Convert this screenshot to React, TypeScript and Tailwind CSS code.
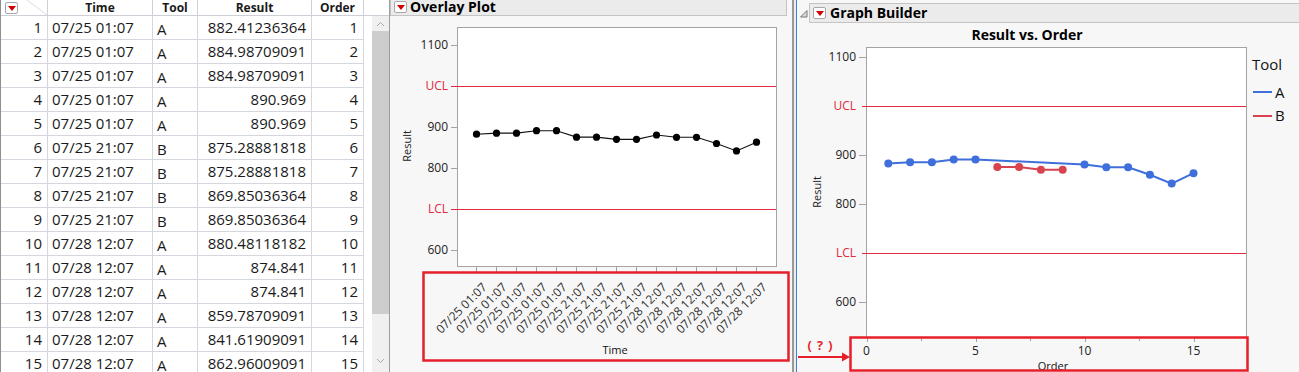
import React from 'react';

// JMP-style report: data table + Overlay Plot + Graph Builder

type Row = { time: string; tool: 'A' | 'B'; result: string };

const rows: Row[] = [
  { time: '07/25 01:07', tool: 'A', result: '882.41236364' },
  { time: '07/25 01:07', tool: 'A', result: '884.98709091' },
  { time: '07/25 01:07', tool: 'A', result: '884.98709091' },
  { time: '07/25 01:07', tool: 'A', result: '890.969' },
  { time: '07/25 01:07', tool: 'A', result: '890.969' },
  { time: '07/25 21:07', tool: 'B', result: '875.28881818' },
  { time: '07/25 21:07', tool: 'B', result: '875.28881818' },
  { time: '07/25 21:07', tool: 'B', result: '869.85036364' },
  { time: '07/25 21:07', tool: 'B', result: '869.85036364' },
  { time: '07/28 12:07', tool: 'A', result: '880.48118182' },
  { time: '07/28 12:07', tool: 'A', result: '874.841' },
  { time: '07/28 12:07', tool: 'A', result: '874.841' },
  { time: '07/28 12:07', tool: 'A', result: '859.78709091' },
  { time: '07/28 12:07', tool: 'A', result: '841.61909091' },
  { time: '07/28 12:07', tool: 'A', result: '862.96009091' },
];

const RED = '#e6283f';
const AXIS = '#a3a3a3';

// snap to pixel centre so 1px lines stay crisp
const crisp = (n: number) => Math.round(n) + 0.5;

const RedMenuButton: React.FC = () => (
  <span className="flex h-[12px] w-[13px] shrink-0 items-center justify-center rounded-[2px] border border-[#a8a8a8] bg-white">
    <span className="h-0 w-0 border-x-[4px] border-t-[5px] border-x-transparent border-t-[#d40000]" />
  </span>
);

const Chevron: React.FC<{ up?: boolean }> = ({ up }) => (
  <svg width="9" height="6" viewBox="0 0 9 6">
    <polyline
      points={up ? '1,5 4.5,1.5 8,5' : '1,1 4.5,4.5 8,1'}
      fill="none"
      stroke="#a8a8a8"
      strokeWidth="1"
    />
  </svg>
);

const gridCols = 'grid grid-cols-[47px_105px_45px_114px_52px]';

const DataTable: React.FC = () => (
  <div className="flex w-[389px] shrink-0 flex-col border-l border-[#8f8f8f] bg-white">
    {/* header */}
    <div className="flex h-[16px] border-b border-[#cfcfd8] text-[12px] font-bold leading-[15px]">
      <div className={gridCols}>
        <div className="relative flex items-start border-r border-[#cfcfd8] pl-[4px] pt-[2px]">
          <svg className="absolute inset-0" width="46" height="15">
            <line x1="26" y1="0" x2="46" y2="15" stroke="#dcdcdc" />
          </svg>
          <RedMenuButton />
        </div>
        <div className="border-r border-[#cfcfd8] text-center">Time</div>
        <div className="border-r border-[#cfcfd8] text-center">Tool</div>
        <div className="border-r border-[#cfcfd8] text-center">Result</div>
        <div className="border-r border-[#cfcfd8] text-center">Order</div>
      </div>
      <div className="flex-1" />
    </div>

    {/* body */}
    <div className="flex flex-1 overflow-hidden">
      <div className="w-[371px] text-[15px] leading-[23px]">
        {rows.map((r, i) => (
          <div key={i} className={`${gridCols} h-[24px] w-[363px] border-b border-[#d6d6de]`}>
            <div className="border-r border-[#d6d6de] pr-[5px] text-right">{i + 1}</div>
            <div className="border-r border-[#d6d6de] pl-[4px]">{r.time}</div>
            <div className="border-r border-[#d6d6de] pl-[4px] pt-[2px]">{r.tool}</div>
            <div className="border-r border-[#d6d6de] pr-[5px] text-right">{r.result}</div>
            <div className="border-r border-[#d6d6de] pr-[5px] text-right">{i + 1}</div>
          </div>
        ))}
      </div>
      <div className="flex w-[17px] flex-col bg-[#f0f0f0]">
        <div className="flex h-[15px] items-center justify-center">
          <Chevron up />
        </div>
        <div className="h-[283px] bg-[#cdcdcd]" />
        <div className="flex flex-1 items-end justify-center pb-[8px]">
          <Chevron />
        </div>
      </div>
    </div>
  </div>
);

const values = rows.map((r) => parseFloat(r.result));

const OverlayPlot: React.FC = () => {
  const yOf = (v: number) => 87 + (1000 - v) * 0.41;
  const xOf = (i: number) => 476.5 + i * 20;
  const pts = values.map((v, i) => `${xOf(i)},${yOf(v)}`).join(' ');

  return (
    <div className="flex w-[403px] shrink-0 flex-col border-l border-[#9c9c9c] bg-[#f7f7f7]">
      <div className="-mt-[1px] flex h-[17px] w-[397px] items-start border border-[#c4c4c4] bg-[#ebebeb] pl-[3px] pt-[1px]">
        <RedMenuButton />
        <span className="-mt-[1px] ml-[3px] text-[14px] font-bold leading-[14px] text-black">Overlay Plot</span>
      </div>
      <svg width="402" height="355" viewBox="390 17 402 355" className="block">
        <rect x="457.5" y="28.5" width="319" height="239" fill="#fff" stroke={AXIS} />
        {[1100, 900, 800, 600].map((v) => (
          <g key={v}>
            <line x1="451" x2="457" y1={crisp(yOf(v))} y2={crisp(yOf(v))} stroke={AXIS} />
            <text x="448" y={yOf(v) + 4} fontSize="12" textAnchor="end" fill="#222">
              {v}
            </text>
          </g>
        ))}
        {[
          ['UCL', 1000],
          ['LCL', 700],
        ].map(([label, v]) => (
          <g key={label}>
            <line
              x1="451"
              x2="776"
              y1={crisp(yOf(v as number))}
              y2={crisp(yOf(v as number))}
              stroke={RED}
            />
            <text x="448" y={yOf(v as number) + 4} fontSize="12" textAnchor="end" fill={RED}>
              {label}
            </text>
          </g>
        ))}
        <text x="411" y="147" fontSize="11" textAnchor="middle" fill="#222" transform="rotate(-90 411 147)">
          Result
        </text>
        {values.map((_, i) => (
          <line key={i} x1={xOf(i)} x2={xOf(i)} y1="268" y2="273" stroke={AXIS} />
        ))}
        <polyline points={pts} fill="none" stroke="#111" strokeWidth="1.1" />
        {values.map((v, i) => (
          <circle key={i} cx={xOf(i)} cy={yOf(v)} r="3.6" fill="#000" />
        ))}
        {rows.map((r, i) => {
          const ax = xOf(i) + 11;
          const ay = 289;
          return (
            <text
              key={i}
              x={ax}
              y={ay}
              fontSize="12"
              textAnchor="end"
              fill="#333"
              transform={`rotate(-45 ${ax} ${ay})`}
            >
              {r.time}
            </text>
          );
        })}
        <text x="615" y="355" fontSize="11" textAnchor="middle" fill="#111">
          Time
        </text>
        <rect x="423.5" y="273.5" width="365" height="88" fill="none" stroke="#e61f2b" strokeWidth="2.5" />
      </svg>
    </div>
  );
};

const GraphBuilder: React.FC = () => {
  const yOf = (v: number) => 106 + (1000 - v) * 0.49;
  const xOf = (o: number) => 866.5 + o * 21.8;
  const blue = '#3f6fdb';
  const red = '#d8434f';
  const pts = values.map((v, i) => ({ v, o: i + 1, t: rows[i].tool }));
  const aPts = pts.filter((p) => p.t === 'A');
  const bPts = pts.filter((p) => p.t === 'B');
  const line = (p: { v: number; o: number }[]) => p.map((q) => `${xOf(q.o)},${yOf(q.v)}`).join(' ');

  return (
    <div className="flex flex-1">
      <div className="w-[2px] bg-[#9a9a9a]" />
      <div className="w-[2px] bg-[#ececec]" />
      <div className="w-[1px] bg-[#3f7fd6]" />
      <div className="flex flex-1 flex-col bg-[#f7f7f7]">
        <div className="flex h-[23px] items-start pt-[3px]">
          <svg className="ml-[3px] mt-[7px]" width="8" height="8" viewBox="0 0 8 8">
            <polygon points="7,0.5 7,7 0.5,7" fill="#d8d8d8" stroke="#7a7a7a" strokeWidth="1" />
          </svg>
          <div className="ml-[1px] flex h-[20px] flex-1 items-center border-y border-l border-[#c4c4c4] bg-[#ebebeb] pl-[3px]">
            <RedMenuButton />
            <span className="ml-[4px] text-[14px] font-bold leading-[18px] text-black">Graph Builder</span>
          </div>
        </div>
        <svg width="502" height="349" viewBox="797 23 502 349" className="block">
          <text x="1027" y="40" fontSize="14" fontWeight="bold" textAnchor="middle" fill="#000">
            Result vs. Order
          </text>
          <rect x="866.5" y="47.5" width="380" height="290" fill="#fff" stroke={AXIS} />
          {[1100, 900, 800, 600].map((v) => (
            <g key={v}>
              <line x1="859" x2="866" y1={crisp(yOf(v))} y2={crisp(yOf(v))} stroke={AXIS} />
              <text x="856" y={yOf(v) + 4} fontSize="12" textAnchor="end" fill="#222">
                {v}
              </text>
            </g>
          ))}
          {[
            ['UCL', 1000],
            ['LCL', 700],
          ].map(([label, v]) => (
            <g key={label}>
              <line
                x1="862"
                x2="1246"
                y1={crisp(yOf(v as number))}
                y2={crisp(yOf(v as number))}
                stroke={RED}
              />
              <text x="856" y={yOf(v as number) + 4} fontSize="12" textAnchor="end" fill={RED}>
                {label}
              </text>
            </g>
          ))}
          <text x="821" y="192" fontSize="11" textAnchor="middle" fill="#222" transform="rotate(-90 821 192)">
            Result
          </text>
          {[0, 5, 10, 15].map((o) => (
            <g key={o}>
              <line x1={crisp(xOf(o))} x2={crisp(xOf(o))} y1="338" y2="342" stroke={AXIS} />
              <text x={xOf(o)} y="355" fontSize="12" textAnchor="middle" fill="#222">
                {o}
              </text>
            </g>
          ))}
          {[2.5, 7.5, 12.5].map((o) => (
            <line key={o} x1={crisp(xOf(o))} x2={crisp(xOf(o))} y1="338" y2="341" stroke={AXIS} />
          ))}
          <text x="1053" y="370" fontSize="11" textAnchor="middle" fill="#111">
            Order
          </text>

          <polyline points={line(aPts)} fill="none" stroke={blue} strokeWidth="2" />
          {aPts.map((p) => (
            <circle key={p.o} cx={xOf(p.o)} cy={yOf(p.v)} r="4" fill={blue} />
          ))}
          <polyline points={line(bPts)} fill="none" stroke={red} strokeWidth="2" />
          {bPts.map((p) => (
            <circle key={p.o} cx={xOf(p.o)} cy={yOf(p.v)} r="4" fill={red} />
          ))}

          {/* legend */}
          <text x="1252" y="70" fontSize="15" fill="#111">
            Tool
          </text>
          <line x1="1253" x2="1272" y1="92" y2="92" stroke={blue} strokeWidth="2" />
          <text x="1275" y="98" fontSize="15" fill="#111">
            A
          </text>
          <line x1="1253" x2="1272" y1="116" y2="116" stroke={red} strokeWidth="2" />
          <text x="1275" y="121" fontSize="15" fill="#111">
            B
          </text>

          {/* annotation */}
          <rect x="850.5" y="337.5" width="397" height="33" fill="none" stroke="#e61f2b" strokeWidth="2.5" />
          <line x1="798" x2="843" y1="357" y2="357" stroke="#e61f2b" strokeWidth="2" />
          <polygon points="842,352.5 850,357 842,361.5" fill="#e61f2b" />
          <text x="820.5" y="350" fontSize="12.5" fontWeight="bold" textAnchor="middle" fill="#e61f2b" letterSpacing="1">
            ( ? )
          </text>
        </svg>
      </div>
    </div>
  );
}

export default function App() {
  return (
    <div className="flex h-[372px] w-[1299px] overflow-hidden bg-[#f7f7f7] font-['Open_Sans','Noto_Sans',sans-serif] text-[#1a1a1a]">
      <DataTable />
      <OverlayPlot />
      <GraphBuilder />
    </div>
  );
}
